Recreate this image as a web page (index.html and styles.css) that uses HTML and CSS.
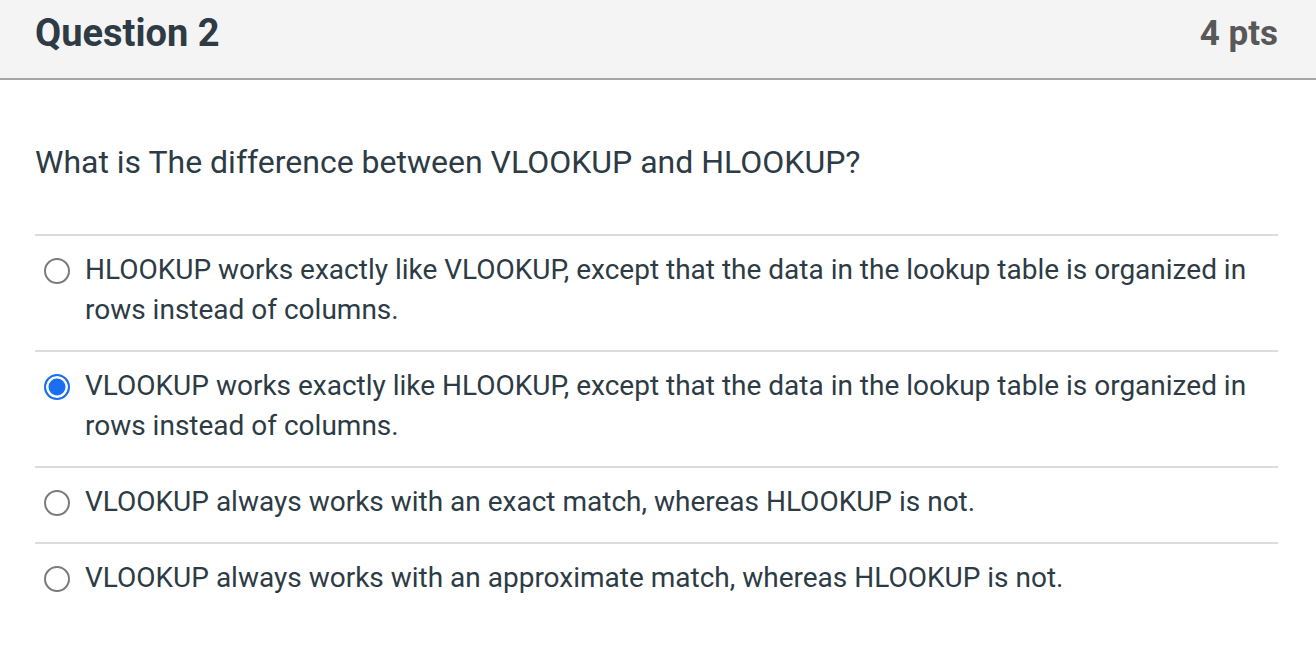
FILE: index.html
```html
<!DOCTYPE html>
<html lang="en">
<head>
<meta charset="utf-8">
<title>Question 2</title>
<link rel="stylesheet" href="styles.css">
</head>
<body>
<div class="question">
  <header class="q-header">
    <h2 class="q-title">Question 2</h2>
    <span class="q-points">4 pts</span>
  </header>
  <div class="q-body">
    <p class="q-text">What is The difference between VLOOKUP and HLOOKUP?</p>
    <ul class="answers">
      <li class="answer">
        <span class="radio"></span>
        <span class="answer-text">HLOOKUP works exactly like VLOOKUP, except that the data in the lookup table is organized in rows instead of columns.</span>
      </li>
      <li class="answer">
        <span class="radio checked"></span>
        <span class="answer-text">VLOOKUP works exactly like HLOOKUP, except that the data in the lookup table is organized in rows instead of columns.</span>
      </li>
      <li class="answer">
        <span class="radio"></span>
        <span class="answer-text">VLOOKUP always works with an exact match, whereas HLOOKUP is not.</span>
      </li>
      <li class="answer">
        <span class="radio"></span>
        <span class="answer-text">VLOOKUP always works with an approximate match, whereas HLOOKUP is not.</span>
      </li>
    </ul>
  </div>
</div>
</body>
</html>
```

FILE: styles.css
```css
* { box-sizing: border-box; }
html, body {
  margin: 0;
  padding: 0;
  background: #ffffff;
}
body {
  font-family: Roboto, "Liberation Sans", sans-serif;
  color: #2d3b45;
}
.q-header {
  display: flex;
  align-items: center;
  justify-content: space-between;
  height: 80px;
  padding: 0 38px 12px 35px;
  background: #f4f4f4;
  border-bottom: 2px solid #a6a6a6;
}
.q-title {
  margin: 0;
  font-size: 38px;
  font-weight: 700;
  color: #2d3b45;
}
.q-points {
  font-size: 35px;
  font-weight: 700;
  color: #585858;
}
.q-body {
  padding: 0 38px 0 35px;
}
.q-text {
  margin: 0;
  padding: 62px 0 52px;
  font-size: 32px;
  line-height: 40px;
}
.answers {
  list-style: none;
  margin: 0;
  padding: 0;
}
.answer {
  display: flex;
  align-items: flex-start;
  gap: 15px;
  padding: 14px 0 20px 9px;
  border-top: 2px solid #dcdcdc;
  font-size: 28px;
  line-height: 40px;
}
.radio {
  flex: none;
  width: 26px;
  height: 26px;
  margin-top: 8px;
  border: 2px solid #7a7a7a;
  border-radius: 50%;
  background: #fff;
}
.radio.checked {
  border: 2.5px solid #1a6ff0;
  background: #1a6ff0;
  box-shadow: inset 0 0 0 2.5px #fff;
}
```
